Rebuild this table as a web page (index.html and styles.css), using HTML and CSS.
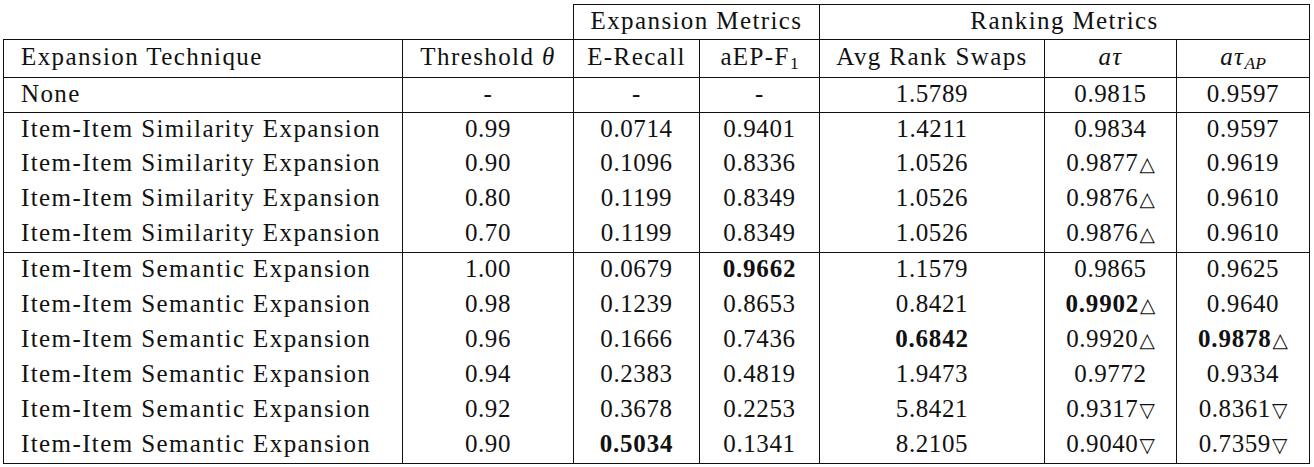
FILE: index.html
```html
<!DOCTYPE html>
<html>
<head>
<meta charset="utf-8">
<link rel="stylesheet" href="styles.css">
</head>
<body>
<table class="results">
  <colgroup>
    <col class="c-tech"><col class="c-thr"><col class="c-rec"><col class="c-f1"><col class="c-swap"><col class="c-tau"><col class="c-tauap">
  </colgroup>
  <tr class="group-row">
    <td class="blank"></td>
    <td class="blank"></td>
    <td colspan="2" class="group lbl">Expansion Metrics</td>
    <td colspan="3" class="group lbl">Ranking Metrics</td>
  </tr>
  <tr class="head-row">
    <td class="tech lbl">Expansion Technique</td>
    <td class="lbl">Threshold <i class="m">θ</i></td>
    <td class="lbl">E-Recall</td>
    <td class="lbl">aEP-F<sub>1</sub></td>
    <td class="lbl">Avg Rank Swaps</td>
    <td class="lbl"><i class="m">aτ</i></td>
    <td class="lbl"><i class="m">aτ<sub>AP</sub></i></td>
  </tr>
  <tr class="sec short">
    <td class="tech lbl">None</td><td>-</td><td>-</td><td>-</td><td>1.5789</td><td>0.9815</td><td>0.9597</td>
  </tr>
  <tr class="sec short">
    <td class="tech lbl">Item-Item Similarity Expansion</td><td>0.99</td><td>0.0714</td><td>0.9401</td><td>1.4211</td><td>0.9834</td><td>0.9597</td>
  </tr>
  <tr>
    <td class="tech lbl">Item-Item Similarity Expansion</td><td>0.90</td><td>0.1096</td><td>0.8336</td><td>1.0526</td><td>0.9877<span class="tri">△</span></td><td>0.9619</td>
  </tr>
  <tr>
    <td class="tech lbl">Item-Item Similarity Expansion</td><td>0.80</td><td>0.1199</td><td>0.8349</td><td>1.0526</td><td>0.9876<span class="tri">△</span></td><td>0.9610</td>
  </tr>
  <tr>
    <td class="tech lbl">Item-Item Similarity Expansion</td><td>0.70</td><td>0.1199</td><td>0.8349</td><td>1.0526</td><td>0.9876<span class="tri">△</span></td><td>0.9610</td>
  </tr>
  <tr class="sec">
    <td class="tech lbl">Item-Item Semantic Expansion</td><td>1.00</td><td>0.0679</td><td><b>0.9662</b></td><td>1.1579</td><td>0.9865</td><td>0.9625</td>
  </tr>
  <tr>
    <td class="tech lbl">Item-Item Semantic Expansion</td><td>0.98</td><td>0.1239</td><td>0.8653</td><td>0.8421</td><td><b>0.9902</b><span class="tri">△</span></td><td>0.9640</td>
  </tr>
  <tr>
    <td class="tech lbl">Item-Item Semantic Expansion</td><td>0.96</td><td>0.1666</td><td>0.7436</td><td><b>0.6842</b></td><td>0.9920<span class="tri">△</span></td><td><b>0.9878</b><span class="tri">△</span></td>
  </tr>
  <tr>
    <td class="tech lbl">Item-Item Semantic Expansion</td><td>0.94</td><td>0.2383</td><td>0.4819</td><td>1.9473</td><td>0.9772</td><td>0.9334</td>
  </tr>
  <tr>
    <td class="tech lbl">Item-Item Semantic Expansion</td><td>0.92</td><td>0.3678</td><td>0.2253</td><td>5.8421</td><td>0.9317<span class="tri">▽</span></td><td>0.8361<span class="tri">▽</span></td>
  </tr>
  <tr>
    <td class="tech lbl">Item-Item Semantic Expansion</td><td>0.90</td><td><b>0.5034</b></td><td>0.1341</td><td>8.2105</td><td>0.9040<span class="tri">▽</span></td><td>0.7359<span class="tri">▽</span></td>
  </tr>
</table>
</body>
</html>
```
FILE: styles.css
```css
html, body {
  margin: 0;
  padding: 0;
  background: #fff;
}
body {
  padding: 4px 0 0 3px;
  font-family: "Liberation Serif", "Times New Roman", serif;
  font-size: 25px;
  color: #111;
}
.results {
  border-collapse: collapse;
  table-layout: fixed;
  width: 1306px;
}
.c-tech { width: 399px; }
.c-thr { width: 171px; }
.c-rec { width: 126px; }
.c-f1 { width: 120px; }
.c-swap { width: 225px; }
.c-tau { width: 132px; }
.c-tauap { width: 133px; }
.results td {
  border-left: 1px solid #111;
  border-right: 1px solid #111;
  padding: 0;
  height: 35px;
  line-height: 32px;
  vertical-align: top;
  text-align: center;
  white-space: nowrap;
  letter-spacing: 0.6px;
}
.results tr.short td {
  height: 34px;
  line-height: 32px;
}
.results td.lbl {
  letter-spacing: 1.4px;
}
.results td.tech {
  text-align: left;
  padding-left: 17px;
}
.results td.blank {
  border: none;
}
.results .group-row td {
  height: 34px;
  line-height: 32px;
}
.group-row td.group {
  border-top: 1px solid #111;
}
.results .head-row td {
  height: 37px;
  line-height: 34px;
}
.head-row td, .sec td {
  border-top: 1px solid #111;
}
.results tr:last-child td {
  border-bottom: 1px solid #111;
}
.m {
  font-style: italic;
}
sub {
  font-size: 0.7em;
  line-height: 0;
  vertical-align: -0.25em;
  letter-spacing: 0;
}
b {
  font-weight: bold;
  letter-spacing: 0.8px;
}
.tri {
  font-family: "DejaVu Sans", sans-serif;
  font-size: 0.8em;
  line-height: 0;
  letter-spacing: 0;
  margin-left: 1px;
}
```
